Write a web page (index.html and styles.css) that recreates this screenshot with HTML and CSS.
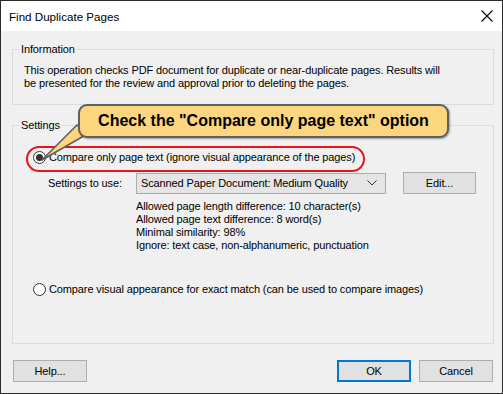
FILE: index.html
```html
<!DOCTYPE html>
<html>
	<head>
		<meta charset="UTF-8">
		<title>Find Duplicate Pages</title>
		<link rel="stylesheet" href="styles.css">
	</head>
	<body>
		<div class="window">
			<div class="titlebar">
				<span class="title">Find Duplicate Pages</span>
				<svg class="close" width="12" height="12" viewBox="0 0 12 12">
					<path d="M0.5 0.5L11.5 11.5M11.5 0.5L0.5 11.5" stroke="#000" stroke-width="1.1" fill="none"/>
				</svg>
			</div>
			<div class="content">
				<fieldset class="group info">
					<legend>Information</legend>
					<p>This operation checks PDF document for duplicate or near-duplicate pages. Results will<br>be presented for the review and approval prior to deleting the pages.</p>
				</fieldset>
				<fieldset class="group settings">
					<legend>Settings</legend>
					<label class="radio">
						<span class="circle checked"></span>
						Compare only page text (ignore visual appearance of the pages)
					</label>
					<div class="use-row">
						<span class="use-label">Settings to use:</span>
						<div class="select">
							<span>Scanned Paper Document: Medium Quality</span>
							<svg width="10" height="6" viewBox="0 0 10 6">
								<path d="M0.5 0.5L5 5L9.5 0.5" stroke="#333" stroke-width="1" fill="none"/>
							</svg>
						</div>
						<button class="btn edit">Edit...</button>
					</div>
					<ul class="details">
						<li>Allowed page length difference: 10 character(s)</li>
						<li>Allowed page text difference: 8 word(s)</li>
						<li>Minimal similarity: 98%</li>
						<li>Ignore: text case, non-alphanumeric, punctuation</li>
					</ul>
					<label class="radio second">
						<span class="circle"></span>
						Compare visual appearance for exact match (can be used to compare images)
					</label>
				</fieldset>
				<div class="buttons">
					<button class="btn">Help...</button>
					<div class="spacer"></div>
					<button class="btn default">OK</button>
					<button class="btn">Cancel</button>
				</div>
			</div>

			<!-- annotation overlay -->
			<div class="ring"></div>
			<svg class="tail" width="70" height="60" viewBox="0 0 70 60">
				<polygon points="46,14 58,22 11,49" fill="#fcd67e" stroke="#5f5f5f" stroke-width="1.6" stroke-linejoin="round"/>
			</svg>
			<div class="callout">Check the "Compare only page text" option</div>
		</div>
	</body>
</html>
```

FILE: styles.css
```css
*{
	margin: 0;
	padding: 0;
	box-sizing: border-box;
}
body{
	font-family: "Liberation Sans", Arial, sans-serif;
	font-size: 11px;
	letter-spacing: -0.12px;
	color: #000;
}
.window{
	position: relative;
	width: 503px;
	height: 394px;
	border: 1px solid #2b2b2b;
	background: #f0f0f0;
	overflow: hidden;
}
.titlebar{
	height: 30px;
	background: #fff;
	display: flex;
	align-items: center;
	padding: 0 8px 0 8px;
}
.title{
	font-size: 11.6px;
	letter-spacing: 0;
	flex: 1;
}
.close{
	margin-right: 1px;
}
.content{
	padding: 11px 8px 0 11px;
}
.group{
	border: 1px solid #dcdcdc;
	padding: 7px 12px 14px 11px;
}
.group legend{
	padding: 0 2px;
	line-height: 15px;
}
.info legend{
	margin-left: -5px;
}
.info p{
	line-height: 13px;
}
.settings{
	margin-top: 13px;
	padding: 16px 12px 46px 20px;
}
.settings legend{
	margin-left: -14px;
}
.radio{
	display: flex;
	align-items: center;
	height: 16px;
}
.circle{
	width: 13px;
	height: 13px;
	border: 1px solid #333;
	border-radius: 50%;
	background: #fff;
	margin-right: 3px;
	display: flex;
	align-items: center;
	justify-content: center;
}
.circle.checked::after{
	content: "";
	width: 7px;
	height: 7px;
	border-radius: 50%;
	background: #333;
}
.use-row{
	display: flex;
	align-items: center;
	margin-top: 7px;
	height: 22px;
}
.use-label{
	width: 103px;
	padding-left: 15px;
	white-space: nowrap;
}
.select{
	width: 250px;
	height: 21px;
	border: 1px solid #acacac;
	background: #e5e5e5;
	display: flex;
	align-items: center;
	justify-content: space-between;
	padding: 0 8px 0 4px;
	white-space: nowrap;
}
.btn{
	font-family: inherit;
	font-size: 11px;
	letter-spacing: inherit;
	width: 74px;
	height: 22px;
	background: #e1e1e1;
	border: 1px solid #adadad;
	color: #000;
}
.edit{
	margin-left: 17px;
	width: 73px;
}
.details{
	list-style-type: none;
	margin-top: 6px;
	padding-left: 103px;
	line-height: 13px;
}
.second{
	margin-top: 29px;
}
.buttons{
	display: flex;
	gap: 8px;
	margin-top: 16px;
	padding: 0 1px 0 1px;
}
.spacer{
	flex: 1;
}
.default{
	border: 2px solid #0078d7;
}
.ring{
	position: absolute;
	left: 25px;
	top: 145px;
	width: 339px;
	height: 26px;
	border: 2px solid #e8141b;
	border-radius: 13px;
}
.tail{
	position: absolute;
	left: 30px;
	top: 110px;
}
.callout{
	position: absolute;
	left: 77px;
	top: 103px;
	width: 371px;
	height: 34px;
	background: #fcd67e;
	border: 2px solid #5f5f5f;
	border-radius: 9px;
	box-shadow: 1px 1px 2px rgba(0,0,0,0.35);
	font-family: "Liberation Sans", Arial, sans-serif;
	font-weight: bold;
	font-size: 16px;
	letter-spacing: 0;
	display: flex;
	align-items: center;
	justify-content: center;
}
```
